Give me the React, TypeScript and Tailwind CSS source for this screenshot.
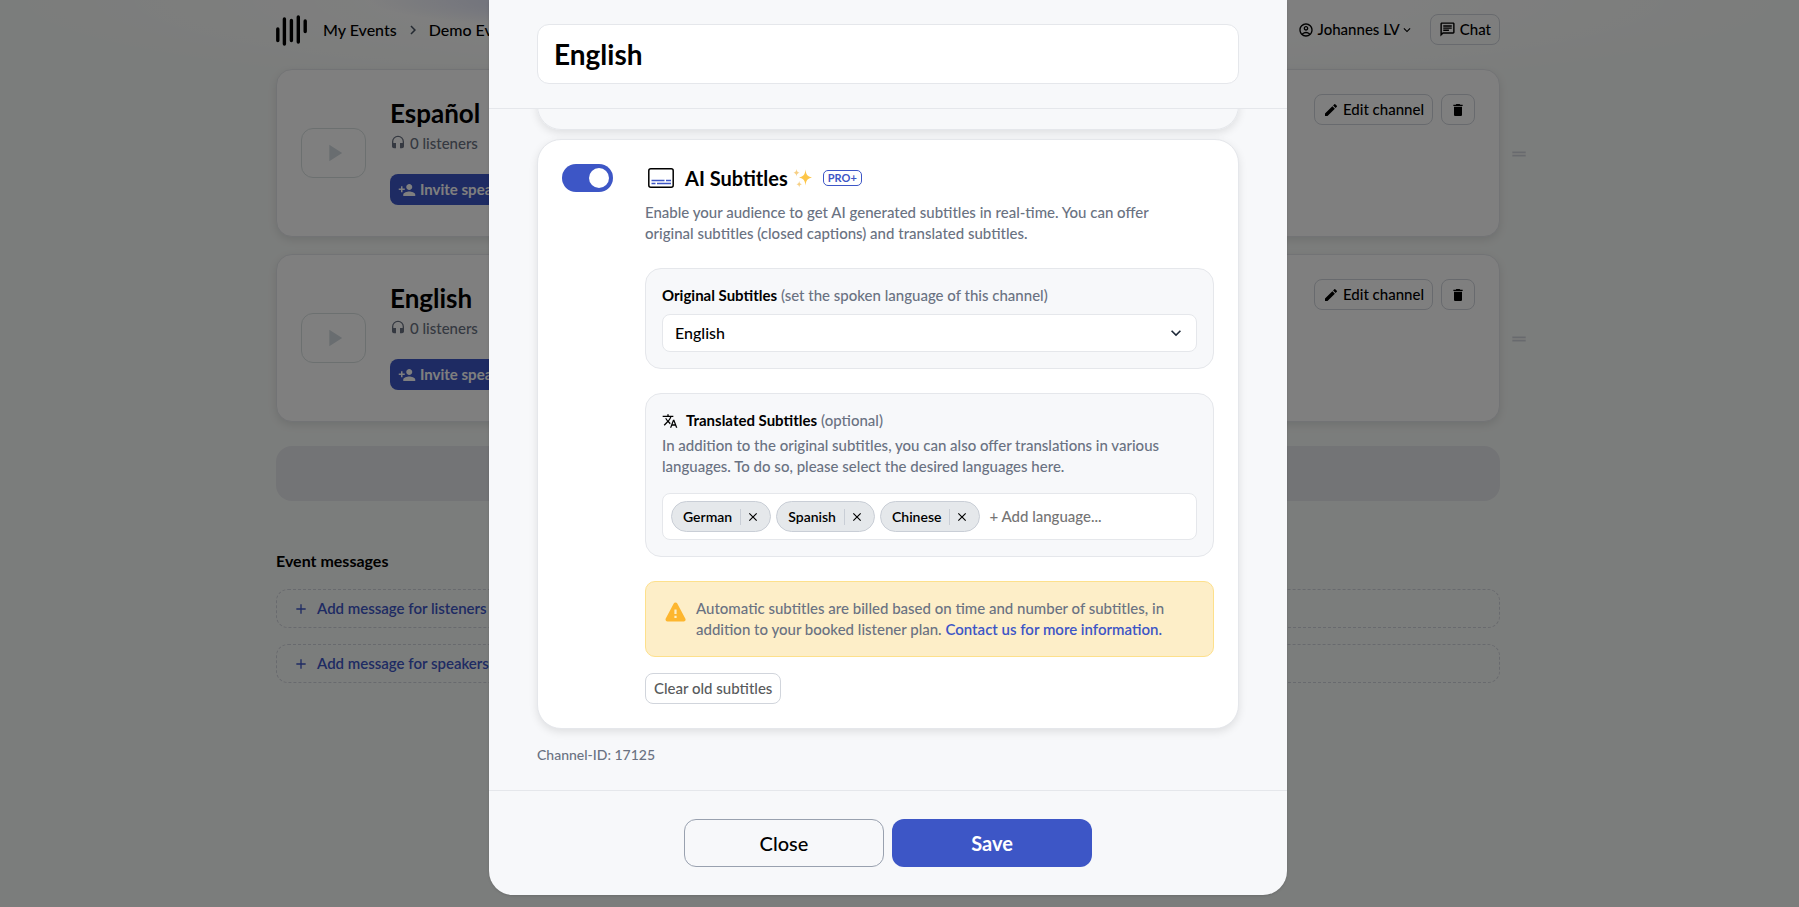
import React from 'react';
import {
  MdChevronRight,
  MdClose,
  MdAdd,
  MdDelete,
  MdDragHandle,
  MdEdit,
  MdHeadset,
  MdKeyboardArrowDown,
  MdOutlineAccountCircle,
  MdOutlineChat,
  MdPersonAdd,
  MdPlayArrow,
  MdTranslate,
} from 'react-icons/md';

const channels = ['Español', 'English'];
const messageTargets = ['listeners', 'speakers'];
const languages = ['German', 'Spanish', 'Chinese'];

const Logo: React.FC = () => (
  <svg className="h-8 w-8" viewBox="0 0 32 32" stroke="#000" strokeWidth="3.4" strokeLinecap="round">
    <path d="M1.800 15v11.500M8.400 5v25M15.400 6.500v20M22.300 3v25M29.200 7v10.500" />
  </svg>
);

const SubtitlesIcon: React.FC = () => (
  <svg className="h-5 w-[26px]" viewBox="0 0 26 20" fill="none">
    <rect x="0.800" y="0.800" width="24.400" height="18.400" rx="2" stroke="#000" strokeWidth="1.500" />
    <path d="M3.500 12.500h13M18 12.500h5M3.500 15.500h4M9 15.500h14" stroke="#3d56c6" strokeWidth="1.300" />
  </svg>
);

const Sparkles: React.FC = () => (
  <svg className="h-5 w-5" viewBox="0 0 20 20">
    <path d="M12.500 1.500c.6 5 1.700 7 6.500 8-4.800 1-5.900 3-6.500 8-.6-5-1.700-7-6.500-8 4.800-1 5.900-3 6.500-8z" fill="#fdc648" />
    <path d="M3.500 1c.3 2.300.9 3.200 3 3.700-2.100.5-2.700 1.400-3 3.700-.3-2.300-.9-3.200-3-3.700 2.100-.5 2.700-1.400 3-3.700z" fill="#f6cf84" />
    <path d="M6.200 13c.3 2.100.8 2.700 2.700 3.200-1.900.5-2.400 1.100-2.700 3.200-.3-2.100-.8-2.700-2.700-3.200 1.900-.5 2.400-1.100 2.700-3.200z" fill="#f6cf84" />
  </svg>
);

const WarningIcon: React.FC = () => (
  <svg className="mt-1 h-5 w-[21px] shrink-0" viewBox="0 0 21 20">
    <path d="M10.500 2.500 18.500 17.500H2.500z" fill="#fdb62f" stroke="#fdb62f" strokeWidth="4" strokeLinejoin="round" />
    <path d="M10.500 7.500v4.500M10.500 13.800v2.200" stroke="#fdeec8" strokeWidth="2.200" />
  </svg>
);

const ChannelCard: React.FC<{ name: string }> = ({ name }) => (
  <div className="relative flex h-[168px] rounded-2xl border border-gray-200 bg-white p-6 shadow-[0_3px_8px_rgba(0,0,0,0.1)]">
    <div className="flex h-[50px] w-[65px] items-center justify-center self-center rounded-xl border border-[#d9e1e1] text-[#d3dbe0]">
      <MdPlayArrow size={28} />
    </div>
    <div className="ml-6 flex flex-col items-start">
      <h2 className="text-[26px] leading-[38px] font-bold">{name}</h2>
      <p className="mt-px flex items-center gap-1 text-[15px] leading-5 font-medium text-gray-500">
        <MdHeadset size={16} />
        0 listeners
      </p>
      <button className="mt-[21px] flex h-[31px] items-center gap-1 rounded-lg bg-[#3d56c6] px-2 text-[15px] font-bold text-white">
        <MdPersonAdd size={18} />
        Invite speakers
      </button>
    </div>
    <div className="ml-auto flex items-start gap-2">
      <button className="flex h-[31px] items-center gap-1 rounded-lg border border-gray-300 px-2 text-[15px] font-medium">
        <MdEdit size={16} />
        Edit channel
      </button>
      <button aria-label="Delete channel" className="flex h-[31px] w-[34px] items-center justify-center rounded-lg border border-gray-300">
        <MdDelete size={16} />
      </button>
    </div>
    <MdDragHandle size={20} className="absolute top-[74px] -right-[30px] text-gray-300" />
  </div>
);

const EventPage: React.FC = () => (
  <div className="mx-auto max-w-[1224px]">
    <header className="flex h-[69px] items-start pt-[14px] text-base font-medium">
      <div className="flex h-[31px] items-center">
        <Logo />
        <a href="#events" className="ml-[15px]">My Events</a>
        <MdChevronRight size={18} className="mx-[7px] text-gray-600" />
        <a href="#demo">Demo Event</a>
      </div>
      <div className="ml-auto flex h-[31px] items-center text-[15px]">
        <button className="mr-4 flex items-center">
          <MdOutlineAccountCircle size={16} className="mr-1" />
          Johannes LV
          <MdKeyboardArrowDown size={14} />
        </button>
        <button className="flex h-[31px] items-center gap-1 rounded-lg border border-gray-300 px-2">
          <MdOutlineChat size={17} />
          Chat
        </button>
      </div>
    </header>
    <main>
      <div className="flex flex-col gap-[17px]">
        {channels.map((name) => (
          <ChannelCard key={name} name={name} />
        ))}
      </div>
      <div className="mt-6 h-[55px] rounded-2xl bg-[#e6e8ec]" />
      <h3 className="mt-12 mb-4 text-base leading-6 font-bold">Event messages</h3>
      <div className="flex flex-col gap-4">
        {messageTargets.map((target) => (
          <button
            key={target}
            className="flex h-[39px] w-full items-center gap-2 rounded-xl border border-dashed border-gray-300 px-4 text-[15px] font-semibold text-[#3d56c6]"
          >
            <MdAdd size={16} />
            Add message for {target}
          </button>
        ))}
      </div>
    </main>
  </div>
);

const Chip: React.FC<{ label: string }> = ({ label }) => (
  <div className="flex h-[31px] items-center rounded-full border border-[#c9ced6] bg-[#e5e8eb] pr-[10px] pl-[11px] text-sm font-semibold">
    {label}
    <button aria-label={`Remove ${label}`} className="ml-2 flex h-4 items-center border-l border-[#c9ced6] pl-[5px]">
      <MdClose size={14} />
    </button>
  </div>
);

const SubtitlesCard: React.FC = () => (
  <section className="flex shrink-0 rounded-3xl border border-gray-200 bg-white p-6 shadow-[0_3px_8px_rgba(0,0,0,0.1)]">
    <label className="relative h-7 w-[51px] shrink-0">
      <input type="checkbox" defaultChecked aria-label="AI Subtitles" className="peer sr-only" />
      <span className="block h-7 rounded-full bg-gray-300 peer-checked:bg-[#3d56c6]" />
      <span className="absolute top-1 right-1 h-5 w-5 rounded-full bg-white" />
    </label>
    <div className="ml-8 flex-1">
      <div className="mb-[10px] flex h-7 items-center pl-[3px]">
        <SubtitlesIcon />
        <h2 className="mr-[5px] ml-[11px] text-xl font-bold">AI Subtitles</h2>
        <Sparkles />
        <span className="ml-[10px] flex h-4 items-center rounded-[5px] border border-[#3d56c6] px-1 text-[11px] font-bold text-[#3d56c6]">PRO+</span>
      </div>
      <p className="max-w-[520px] text-[15px] leading-[21px] font-medium text-gray-500">
        Enable your audience to get AI generated subtitles in real-time. You can offer original subtitles (closed captions) and translated subtitles.
      </p>

      <div className="mt-6 rounded-2xl border border-gray-200 bg-[#f7f8fa] p-4">
        <label htmlFor="language" className="mb-2 block text-[15px] leading-[21px] font-medium text-gray-500">
          <span className="font-bold text-black">Original Subtitles</span> (set the spoken language of this channel)
        </label>
        <div className="relative">
          <select id="language" className="block h-[38px] w-full appearance-none rounded-lg border border-gray-200 bg-white px-3 text-base font-medium">
            <option>English</option>
          </select>
          <MdKeyboardArrowDown size={20} className="pointer-events-none absolute top-[9px] right-[11px] text-gray-800" />
        </div>
      </div>

      <div className="mt-6 rounded-2xl border border-gray-200 bg-[#f7f8fa] p-4">
        <label htmlFor="translations" className="flex items-center text-[15px] leading-[21px] font-medium text-gray-500">
          <MdTranslate size={16} className="mr-2 text-black" />
          <span className="mr-1 font-bold text-black">Translated Subtitles</span>
          (optional)
        </label>
        <p className="mt-1 mb-4 max-w-[510px] text-[15px] leading-[21px] font-medium text-gray-500">
          In addition to the original subtitles, you can also offer translations in various languages. To do so, please select the desired languages here.
        </p>
        <div className="flex gap-[5px] rounded-lg border border-gray-200 bg-white px-2 py-[7px]">
          {languages.map((language) => (
            <Chip key={language} label={language} />
          ))}
          <input id="translations" placeholder="+ Add language..." className="min-w-0 flex-1 pl-1 text-[15px] font-medium placeholder:text-[#757575]" />
        </div>
      </div>

      <div className="mt-6 flex gap-[10px] rounded-[10px] border border-[#fde08c] bg-[#fdeec8] px-[19px] py-4">
        <WarningIcon />
        <p className="max-w-[480px] text-[15px] leading-[21px] font-medium text-gray-500">
          Automatic subtitles are billed based on time and number of subtitles, in addition to your booked listener plan.{' '}
          <a href="#contact" className="font-semibold text-[#3d56c6]">Contact us for more information.</a>
        </p>
      </div>
      <button className="mt-4 block h-[31px] rounded-lg border border-gray-300 bg-white px-2 text-[15px] font-medium text-[#585a5c]">
        Clear old subtitles
      </button>
    </div>
  </section>
);

const ChannelDialog: React.FC = () => (
  <div role="dialog" aria-label="Channel settings" className="flex h-full w-full max-w-[798px] flex-col overflow-hidden rounded-b-3xl bg-[#f7f8fa] shadow-sm">
    <div className="border-b border-gray-200 px-12 py-6">
      <input
        aria-label="Channel name"
        defaultValue="English"
        className="block h-[60px] w-full rounded-xl border border-gray-200 bg-white px-4 text-[28px] font-bold"
      />
    </div>
    <div className="flex min-h-0 flex-1 flex-col justify-end overflow-hidden px-12">
      <div className="h-[120px] shrink-0 rounded-3xl border border-gray-200 shadow-[0_3px_8px_rgba(0,0,0,0.1)]" />
      <div className="h-[9px] shrink-0" />
      <SubtitlesCard />
      <p className="mt-[15px] mb-[25px] shrink-0 text-sm leading-[21px] font-medium text-gray-500">Channel-ID: 17125</p>
    </div>
    <div className="flex justify-center gap-2 border-t border-gray-200 py-7">
      <button className="h-12 w-[200px] rounded-xl border border-gray-400 text-xl font-medium">Close</button>
      <button className="h-12 w-[200px] rounded-xl bg-[#3d56c6] text-xl font-bold text-white">Save</button>
    </div>
  </div>
);

export default function App() {
  return (
    <div className="relative h-screen overflow-hidden font-[Lato,'Liberation_Sans',sans-serif] text-black">
      <div className="h-full bg-[#f7faf8] bg-[radial-gradient(430px_36px_at_800px_0px,#dce0f8_60%,transparent_100%),radial-gradient(900px_100px_at_50%_0px,white_50%,transparent_100%)] pr-[23px]">
        <EventPage />
      </div>
      <div className="absolute inset-0 flex justify-center bg-black/50 pr-[23px] pb-3">
        <ChannelDialog />
      </div>
    </div>
  );
}
